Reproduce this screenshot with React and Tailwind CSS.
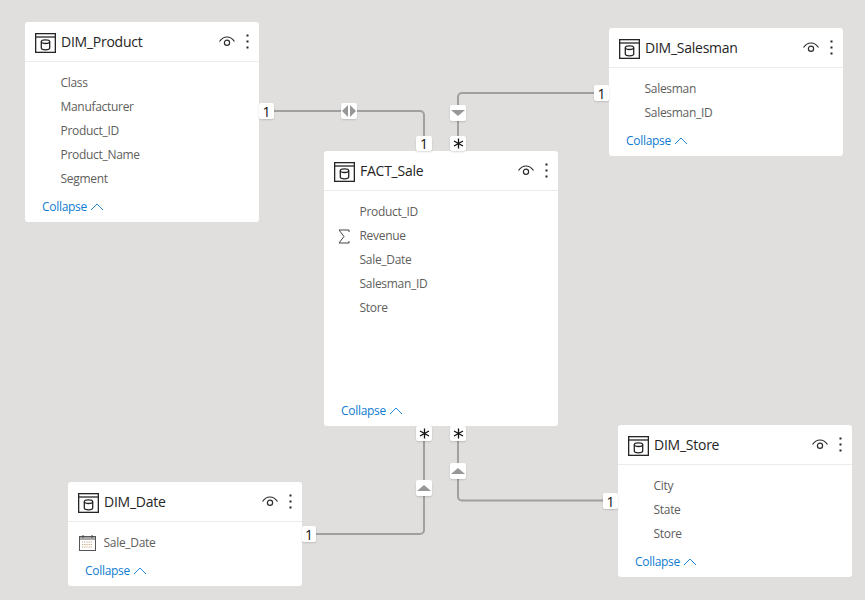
import React from "react";

const Badge = ({ pos, children }) => (
  <div className={"absolute flex items-center justify-center bg-white text-[14px] text-[#111] shadow-[0_1px_2px_rgba(0,0,0,0.15)] rounded-[2px] " + pos}>
    {children}
  </div>
);

const Tri = ({ dir }) => {
  const pts = { up: "1,7 15,7 8,1", down: "1,1 15,1 8,7" };
  return (
    <svg width="16" height="8" viewBox="0 0 16 8">
      <polygon points={pts[dir]} fill="#979797" />
    </svg>
  );
};

const Star = () => (
  <svg width="11" height="11" viewBox="0 0 11 11" stroke="#111" strokeWidth="1.3" fill="none">
    <path d="M5.5 0.5v10M1 3l9 5M10 3l-9 5" />
  </svg>
);

const TableIcon = () => (
  <svg width="21" height="20" viewBox="0 0 21 20" fill="none" stroke="#252423" strokeWidth="1.3" className="mt-[2px] shrink-0">
    <rect x="0.65" y="0.65" width="19.7" height="18.7" />
    <path d="M1 4h19" />
    <ellipse cx="10.5" cy="8.7" rx="4.2" ry="1.8" />
    <path d="M6.300 8.700v6.300c0 1 1.900 1.800 4.200 1.800s4.200-.8 4.200-1.800V8.700" />
  </svg>
);

const Eye = () => (
  <svg width="16" height="11" viewBox="0 0 16 11" fill="none" stroke="#2b2b2b" strokeWidth="1.2">
    <path d="M0.5 5.500C2.500 2.500 5 1 8 1s5.500 1.500 7.500 4.500" />
    <circle cx="8" cy="6.800" r="2.600" />
  </svg>
);

const Dots = () => (
  <svg width="3" height="15" viewBox="0 0 3 15" fill="#252423">
    <rect x="0.5" y="0.5" width="2" height="2" />
    <rect x="0.5" y="6.5" width="2" height="2" />
    <rect x="0.5" y="12.5" width="2" height="2" />
  </svg>
);

const Sigma = () => (
  <svg width="12" height="15" viewBox="0 0 12 15" fill="none" stroke="#444" strokeWidth="1" className="mr-[10px]">
    <path d="M11 3V1H1l5 6.500L1 14h10v-2" />
  </svg>
);

const Calendar = () => (
  <svg width="17" height="16" viewBox="0 0 17 16" fill="none" strokeWidth="1" className="mr-[8px]">
    <rect x="0.5" y="1.5" width="16" height="14" stroke="#555" />
    <rect x="1" y="2" width="15" height="3" fill="#a8a8a8" stroke="none" />
    <path d="M4 0v3M13 0v3" stroke="#444" />
    <path d="M3 7h11M3 9.500h11M3 12h11" stroke="#c9a67e" strokeWidth="1" strokeDasharray="1.200 1" />
  </svg>
);

const Chevron = () => (
  <svg width="14" height="8" viewBox="0 0 14 8" fill="none" stroke="#0f7bd0" strokeWidth="0.9">
    <path d="M1 7l6-6 6 6" />
  </svg>
);

const Card = ({ pos, title, fields }) => (
  <div className={"absolute flex flex-col bg-white rounded-[3px] " + pos}>
    <div className="flex h-10 shrink-0 items-center border-b border-[#edebe9] px-[10px]">
      <TableIcon />
      <span className="ml-[5px] text-[14px] font-medium tracking-[-0.25px] text-[#252423]">{title}</span>
      <div className="ml-auto flex items-center gap-[11px]">
        <Eye />
        <Dots />
      </div>
    </div>
    <div className="flex flex-col pt-[9px]">
      {fields.map((f) => (
        <div key={f.name} className="flex h-6 items-center text-[12px] tracking-[-0.3px] text-[#605e5c]">
          <div className="flex w-[35.5px] shrink-0 items-center justify-end">{f.icon}</div>
          <span>{f.name}</span>
        </div>
      ))}
    </div>
    <div className="mt-auto mb-[6px] flex items-center gap-[3px] pl-[17px] text-[12px] tracking-[-0.3px] text-[#0f7bd0]">
      <span>Collapse</span>
      <Chevron />
    </div>
  </div>
);

const f = (...names) => names.map((name) => ({ name }));

export default function App() {
  return (
    <div className="relative h-[600px] w-[865px] overflow-hidden bg-[#e0dfdd] font-['Open_Sans','Noto_Sans',sans-serif]">
      <svg className="absolute inset-0" width="865" height="600" fill="none" stroke="#a0a0a0" strokeWidth="2">
        <path d="M270 111H420a4 4 0 0 1 4 4V140" />
        <path d="M604 93H462a4 4 0 0 0-4 4V140" />
        <path d="M424 437V530a4 4 0 0 1-4 4H312" />
        <path d="M458 437V496.500a4 4 0 0 0 4 4H608" />
      </svg>

      <Card pos="left-[25px] top-[22px] h-[200px] w-[234px]" title="DIM_Product" fields={f("Class", "Manufacturer", "Product_ID", "Product_Name", "Segment")} />
      <Card pos="left-[609px] top-[28px] h-[128px] w-[234px]" title="DIM_Salesman" fields={f("Salesman", "Salesman_ID")} />
      <Card
        pos="left-[324px] top-[151px] h-[275px] w-[234px]"
        title="FACT_Sale"
        fields={[
          { name: "Product_ID" },
          { name: "Revenue", icon: <Sigma /> },
          { name: "Sale_Date" },
          { name: "Salesman_ID" },
          { name: "Store" },
        ]}
      />
      <Card pos="left-[618px] top-[425px] h-[152px] w-[234px]" title="DIM_Store" fields={f("City", "State", "Store")} />
      <Card pos="left-[68px] top-[482px] h-[104px] w-[234px]" title="DIM_Date" fields={[{ name: "Sale_Date", icon: <Calendar /> }]} />

      <Badge pos="left-[259px] top-[103px] h-4 w-[15px]">1</Badge>
      <Badge pos="left-[341px] top-[103px] h-4 w-4">
        <svg width="14" height="12" viewBox="0 0 14 12">
          <polygon points="6,0 6,12 0,6" fill="#979797" />
          <polygon points="8,0 8,12 14,6" fill="#979797" />
        </svg>
      </Badge>
      <Badge pos="left-[416px] top-[136px] h-[15px] w-4">1</Badge>
      <Badge pos="left-[450px] top-[136px] h-[15px] w-4"><Star /></Badge>
      <Badge pos="left-[450px] top-[105px] h-4 w-4"><Tri dir="down" /></Badge>
      <Badge pos="left-[594px] top-[85px] h-4 w-[15px]">1</Badge>
      <Badge pos="left-[416px] top-[426px] h-[15px] w-4"><Star /></Badge>
      <Badge pos="left-[450px] top-[426px] h-[15px] w-4"><Star /></Badge>
      <Badge pos="left-[416px] top-[480px] h-4 w-4"><Tri dir="up" /></Badge>
      <Badge pos="left-[450px] top-[463px] h-4 w-4"><Tri dir="up" /></Badge>
      <Badge pos="left-[302px] top-[526px] h-4 w-[14px]">1</Badge>
      <Badge pos="left-[603px] top-[493px] h-4 w-[15px]">1</Badge>
    </div>
  );
}
